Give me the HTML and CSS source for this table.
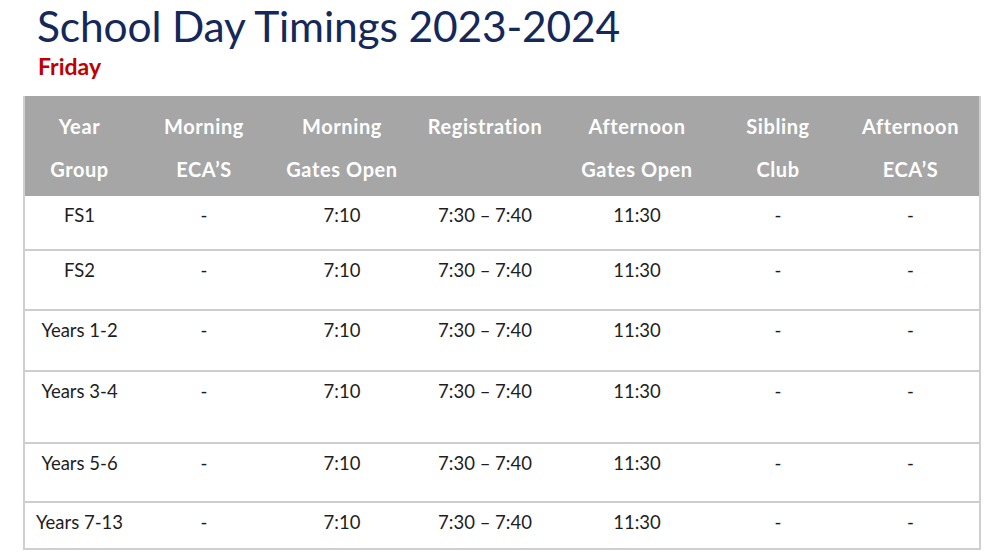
FILE: index.html
```html
<!DOCTYPE html>
<html>
<head>
<meta charset="utf-8">
<link rel="stylesheet" href="styles.css">
</head>
<body>
<div class="page">
  <h1 class="title">School Day Timings 2023-2024</h1>
  <div class="day">Friday</div>
  <table class="timings">
    <colgroup>
      <col class="c1"><col class="c2"><col class="c3"><col class="c4"><col class="c5"><col class="c6"><col class="c7">
    </colgroup>
    <thead>
      <tr>
        <th>Year<br>Group</th>
        <th>Morning<br>ECA’S</th>
        <th>Morning<br>Gates Open</th>
        <th>Registration<br>&nbsp;</th>
        <th>Afternoon<br>Gates Open</th>
        <th>Sibling<br>Club</th>
        <th>Afternoon<br>ECA’S</th>
      </tr>
    </thead>
    <tbody>
      <tr class="r1"><td>FS1</td><td>-</td><td>7:10</td><td>7:30 – 7:40</td><td>11:30</td><td>-</td><td>-</td></tr>
      <tr class="r2"><td>FS2</td><td>-</td><td>7:10</td><td>7:30 – 7:40</td><td>11:30</td><td>-</td><td>-</td></tr>
      <tr class="r3"><td>Years 1-2</td><td>-</td><td>7:10</td><td>7:30 – 7:40</td><td>11:30</td><td>-</td><td>-</td></tr>
      <tr class="r4"><td>Years 3-4</td><td>-</td><td>7:10</td><td>7:30 – 7:40</td><td>11:30</td><td>-</td><td>-</td></tr>
      <tr class="r5"><td>Years 5-6</td><td>-</td><td>7:10</td><td>7:30 – 7:40</td><td>11:30</td><td>-</td><td>-</td></tr>
      <tr class="r6"><td>Years 7-13</td><td>-</td><td>7:10</td><td>7:30 – 7:40</td><td>11:30</td><td>-</td><td>-</td></tr>
    </tbody>
  </table>
</div>
</body>
</html>
```
FILE: styles.css
```css
html, body {
  margin: 0;
  padding: 0;
  background: #ffffff;
}
.page {
  padding: 2px 0 0 23px;
  font-family: Lato, "Liberation Sans", sans-serif;
}
.title {
  margin: 0 0 0 14px;
  padding-top: 0;
  font-weight: 400;
  font-size: 42.5px;
  line-height: 48px;
  color: #14285a;
  letter-spacing: -0.15px;
}
.day {
  margin: 4px 0 0 15px;
  font-weight: 700;
  font-size: 23px;
  line-height: 24px;
  color: #c00000;
}
.timings {
  margin-top: 18px;
  width: 956px;
  border-collapse: collapse;
  table-layout: fixed;
  border-left: 2px solid #cfcfcf;
  border-right: 2px solid #cfcfcf;
  border-bottom: 2px solid #cfcfcf;
}
.c1 { width: 110px; }
.c2 { width: 140px; }
.c3 { width: 136px; }
.c4 { width: 150px; }
.c5 { width: 154px; }
.c6 { width: 128px; }
.c7 { width: 138px; }
.timings th {
  background: #a6a6a6;
  color: #ffffff;
  font-weight: 700;
  font-size: 20px;
  letter-spacing: 0.6px;
  line-height: 43px;
  padding: 9px 0 5px;
  text-align: center;
  vertical-align: top;
  white-space: nowrap;
}
.timings td {
  font-size: 18.5px;
  line-height: 20px;
  color: #1e1e1e;
  text-align: center;
  vertical-align: top;
  padding: 9px 0 0;
  border-top: 2px solid #cdcdcd;
  white-space: nowrap;
}
.timings tbody tr.r1 td { border-top: none; }
.r1 { height: 54px; }
.r2 { height: 60px; }
.r3 { height: 61px; }
.r4 { height: 72px; }
.r5 { height: 59px; }
.r6 { height: 47px; }
```
